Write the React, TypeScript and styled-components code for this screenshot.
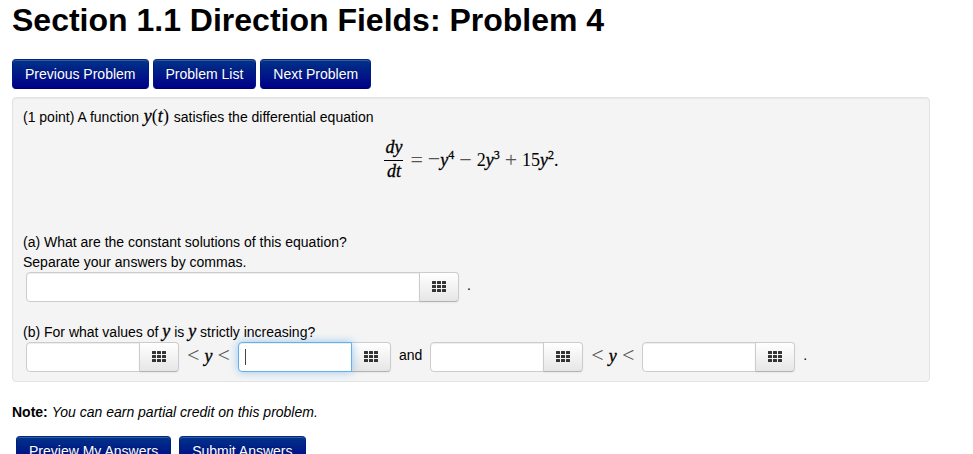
import React from "react";
import styled, { createGlobalStyle } from "styled-components";

const GlobalStyle = createGlobalStyle`
  html {
    scrollbar-width: none;
  }
  body {
    margin: 0;
    background: #fff;
    color: #000;
    font-family: "Liberation Sans", Arial, sans-serif;
    font-size: 14px;
    line-height: 20px;
  }
  * {
    box-sizing: border-box;
  }
`;

const Page = styled.main`
  padding: 0 43px 0 12px;
`;

const Title = styled.h1`
  margin: 0 0 19px;
  font-size: 32px;
  line-height: 40px;
  font-weight: bold;
`;

const ButtonRow = styled.div<{ $gap: number; $inset?: number }>`
  display: flex;
  flex-wrap: wrap;
  gap: ${(p) => p.$gap}px;
  padding-left: ${(p) => p.$inset ?? 0}px;
`;

const PrimaryButton = styled.button`
  height: 30px;
  padding: 4px 12px;
  border: 1px solid;
  border-color: #002a80 #001a80 #000066;
  border-radius: 4px;
  background: linear-gradient(to bottom, #003388, #000088);
  box-shadow: inset 0 1px 0 rgba(255, 255, 255, 0.2);
  color: #fff;
  font: inherit;
  text-shadow: 0 -1px 0 rgba(0, 0, 0, 0.25);
  cursor: pointer;
`;

const Well = styled.section`
  margin: 8px 0 20px;
  padding: 9px 9px 9px 10px;
  border: 1px solid #e3e3e3;
  border-radius: 4px;
  background: #f4f4f4;
  box-shadow: inset 0 1px 1px rgba(0, 0, 0, 0.05);
`;

const Paragraph = styled.p`
  margin: 0;
`;

const Part = styled.div`
  margin-bottom: 20px;

  &:last-child {
    margin-bottom: 0;
  }
`;

const MathText = styled.span`
  font-family: "Liberation Serif", "Times New Roman", serif;
  font-size: 18px;
  line-height: 16px;
  white-space: nowrap;
`;

const Variable = styled.i`
  -webkit-text-stroke: 0.3px currentColor;
`;

const Call = styled(MathText)`
  margin: 0 1px;
`;

const Operator = styled.span`
  color: #555;
  font-size: 22px;
`;

const Power = styled.sup`
  font-size: 12px;
  line-height: 0;
  vertical-align: 7px;
  -webkit-text-stroke: 0.3px currentColor;
`;

const Equation = styled(MathText)`
  display: flex;
  align-items: center;
  justify-content: center;
  gap: 5px;
  margin: 10px 0 50px;
`;

const Fraction = styled.span`
  display: flex;
  flex-direction: column;
  align-items: center;
  margin-right: 2px;
`;

const Numerator = styled.span`
  padding: 0 1px 2px;
  border-bottom: 1px solid #000;
  line-height: 21px;
`;

const Denominator = styled.span`
  line-height: 21px;
`;

const Inequality = styled(MathText)`
  display: flex;
  align-items: baseline;
  justify-content: space-between;
  width: 43px;
  padding-bottom: 4px;
`;

const AnswerRow = styled.div`
  display: flex;
  flex-wrap: wrap;
  align-items: center;
  gap: 8px;
  padding-left: 3px;
`;

const Word = styled.span`
  padding-bottom: 4px;
`;

const Group = styled.span`
  display: flex;
`;

const AnswerInput = styled.input<{ $wide?: boolean }>`
  width: ${(p) => (p.$wide ? 394 : 114)}px;
  height: 30px;
  padding: 4px 6px;
  border: 1px solid #ccc;
  border-radius: 4px 0 0 4px;
  background: #fff;
  box-shadow: inset 0 1px 1px rgba(0, 0, 0, 0.075);
  color: #555;
  font: inherit;

  &:focus {
    position: relative;
    border-color: #66afe9;
    outline: 0;
    box-shadow: inset 0 1px 1px rgba(0, 0, 0, 0.075),
      0 0 8px rgba(82, 168, 236, 0.6);
  }

  &:focus:placeholder-shown {
    background: linear-gradient(#444, #444) 6px 6px / 1px 16px no-repeat #fff;
    caret-color: transparent;
  }
`;

const KeypadButton = styled.button`
  display: flex;
  align-items: center;
  justify-content: center;
  width: 40px;
  height: 30px;
  margin-left: -1px;
  padding: 0 0 1px;
  border: 1px solid #ccc;
  border-bottom-color: #b3b3b3;
  border-radius: 0 4px 4px 0;
  background: linear-gradient(to bottom, #fff, #e6e6e6);
  box-shadow: inset 0 1px 0 rgba(255, 255, 255, 0.2),
    0 1px 2px rgba(0, 0, 0, 0.05);
  cursor: pointer;
`;

const Note = styled.p`
  margin: 0 0 14px;
`;

const cells = [0, 1, 2].flatMap((row) => [0, 1, 2].map((col) => ({ row, col })));

function KeypadIcon() {
  return (
    <svg width="14" height="11" viewBox="0 0 14 11" fill="#333" aria-hidden="true">
      {cells.map(({ row, col }) => (
        <rect key={`${row}-${col}`} x={col * 5} y={row * 4} width="4" height="3" rx="0.2" />
      ))}
    </svg>
  );
}

function Answer({ label, wide, focused }: { label: string; wide?: boolean; focused?: boolean }) {
  return (
    <Group>
      <AnswerInput type="text" placeholder=" " aria-label={label} $wide={wide} autoFocus={focused} />
      <KeypadButton type="button" aria-label={`Equation editor for ${label}`}>
        <KeypadIcon />
      </KeypadButton>
    </Group>
  );
}

function Between() {
  return (
    <Inequality>
      <Operator>&lt;</Operator>
      <Variable>y</Variable>
      <Operator>&lt;</Operator>
    </Inequality>
  );
}

function Term({ coefficient, power }: { coefficient?: string; power: string }) {
  return (
    <span>
      {coefficient}
      <Variable>y</Variable>
      <Power>{power}</Power>
    </span>
  );
}

export default function App() {
  return (
    <Page>
      <GlobalStyle />
      <Title>Section 1.1 Direction Fields: Problem 4</Title>
      <ButtonRow as="nav" $gap={4}>
        <PrimaryButton type="button">Previous Problem</PrimaryButton>
        <PrimaryButton type="button">Problem List</PrimaryButton>
        <PrimaryButton type="button">Next Problem</PrimaryButton>
      </ButtonRow>
      <Well>
        <Paragraph>
          (1 point) A function{" "}
          <Call>
            <Variable>y</Variable>(<Variable>t</Variable>)
          </Call>{" "}
          satisfies the differential equation
        </Paragraph>
        <Equation>
          <Fraction>
            <Numerator>
              <Variable>dy</Variable>
            </Numerator>
            <Denominator>
              <Variable>dt</Variable>
            </Denominator>
          </Fraction>
          <Operator>=</Operator>
          <span>
            <Operator>−</Operator>
            <Term power="4" />
          </span>
          <Operator>−</Operator>
          <Term coefficient="2" power="3" />
          <Operator>+</Operator>
          <span>
            <Term coefficient="15" power="2" />.
          </span>
        </Equation>
        <Part>
          <Paragraph>(a) What are the constant solutions of this equation?</Paragraph>
          <Paragraph>Separate your answers by commas.</Paragraph>
          <AnswerRow>
            <Answer label="Constant solutions" wide />
            <Word>.</Word>
          </AnswerRow>
        </Part>
        <Part>
          <Paragraph>
            (b) For what values of{" "}
            <MathText>
              <Variable>y</Variable>
            </MathText>{" "}
            is{" "}
            <MathText>
              <Variable>y</Variable>
            </MathText>{" "}
            strictly increasing?
          </Paragraph>
          <AnswerRow>
            <Answer label="First lower bound" />
            <Between />
            <Answer label="First upper bound" focused />
            <Word>and</Word>
            <Answer label="Second lower bound" />
            <Between />
            <Answer label="Second upper bound" />
            <Word>.</Word>
          </AnswerRow>
        </Part>
      </Well>
      <Note>
        <b>Note:</b> <i>You can earn partial credit on this problem.</i>
      </Note>
      <ButtonRow $gap={8} $inset={4}>
        <PrimaryButton type="submit">Preview My Answers</PrimaryButton>
        <PrimaryButton type="submit">Submit Answers</PrimaryButton>
      </ButtonRow>
    </Page>
  );
}
